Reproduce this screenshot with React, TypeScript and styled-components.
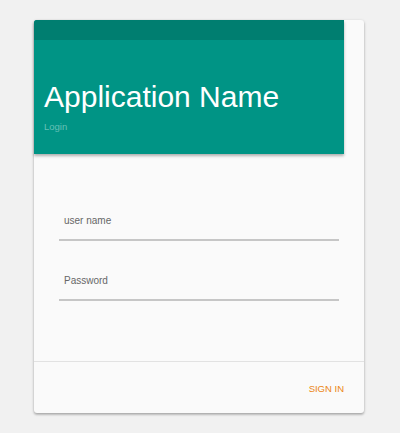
import React from "react";
import styled, { createGlobalStyle } from "styled-components";

const Global = createGlobalStyle`
  html, body { margin: 0; padding: 0; background: #f1f1f1; }
  body { font-family: "Liberation Sans", Arial, sans-serif; }
`;

const Page = styled.div`
  padding: 20px 0 0 34px;
  height: 413px;
`;

const Card = styled.div`
  width: 330px;
  height: 393px;
  background: #fafafa;
  border-radius: 3px;
  box-shadow: 0 1px 3px rgba(0, 0, 0, 0.25), 0 2px 2px rgba(0, 0, 0, 0.12);
  display: flex;
  flex-direction: column;
`;

const Header = styled.header`
  width: 310px;
  height: 134px;
  flex-shrink: 0;
  background: #009485;
  border-top-left-radius: 3px;
  box-shadow: 0 2px 3px rgba(0, 0, 0, 0.3);
  display: flex;
  flex-direction: column;
  position: relative;
  z-index: 1;
`;

const TopBand = styled.div`
  height: 20px;
  background: #007e70;
  border-top-left-radius: 3px;
`;

const Title = styled.h1`
  margin: 40px 0 0 10px;
  font-size: 30px;
  font-weight: 400;
  line-height: normal;
  color: #ffffff;
`;

const Subtitle = styled.div`
  margin: 7px 0 0 10px;
  font-size: 9.5px;
  color: #66c0b6;
`;

const Form = styled.div`
  flex: 1;
  padding: 61px 25px 0 25px;
  display: flex;
  flex-direction: column;
  gap: 34px;
`;

const Field = styled.div`
  display: flex;
  flex-direction: column;
`;

const Label = styled.label`
  padding-left: 5px;
  font-size: 10px;
  line-height: 12px;
  color: #676767;
  padding-bottom: 12px;
`;

const Underline = styled.div`
  height: 2px;
  background: #c6c6c6;
`;

const Footer = styled.footer`
  height: 52px;
  flex-shrink: 0;
  border-top: 1px solid #e2e2e2;
  display: flex;
  justify-content: flex-end;
  align-items: flex-start;
  padding: 21px 20px 0 0;
  box-sizing: border-box;
`;

const SignIn = styled.button`
  border: none;
  background: none;
  padding: 0;
  font-family: "Liberation Sans", Arial, sans-serif;
  font-size: 9.5px;
  line-height: 12px;
  color: #ec8513;
  cursor: pointer;
`;

export default function App() {
  return (
    <>
      <Global />
      <Page>
        <Card>
          <Header>
            <TopBand />
            <Title>Application Name</Title>
            <Subtitle>Login</Subtitle>
          </Header>
          <Form>
            <Field>
              <Label>user name</Label>
              <Underline />
            </Field>
            <Field>
              <Label>Password</Label>
              <Underline />
            </Field>
          </Form>
          <Footer>
            <SignIn>SIGN IN</SignIn>
          </Footer>
        </Card>
      </Page>
    </>
  );
}
